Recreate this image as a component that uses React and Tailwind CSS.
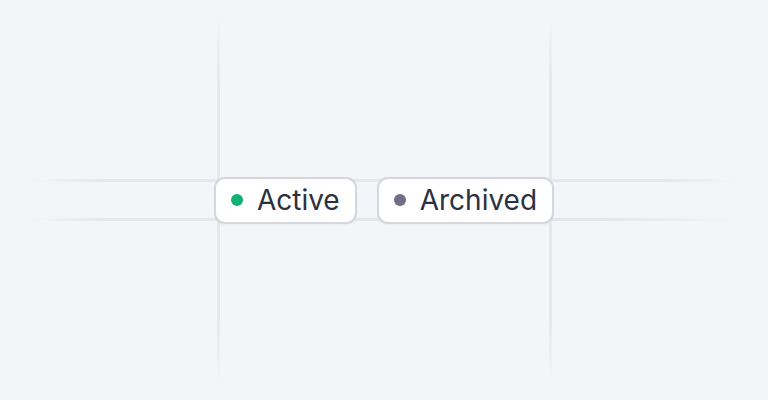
import React from 'react';

const badges = [
  { label: 'Active', dot: 'bg-[#10b173]' },
  { label: 'Archived', dot: 'bg-[#6e6e85]' },
];

function Badge({ label, dot }) {
  return (
    <div className="flex h-[47px] items-center gap-[14px] rounded-[11px] border-2 border-[#d6d7dd] bg-white pl-[15px] pr-[15px] shadow-[0_1px_2px_rgba(0,0,0,0.04)]">
      <span className={`h-3 w-3 rounded-full ${dot}`} />
      <span className="text-[28px] font-normal leading-none text-[#2c3040]">{label}</span>
    </div>
  );
}

export default function App() {
  return (
    <div className="relative h-[400px] w-[768px] overflow-hidden bg-[#f4f5f9] font-['Inter',sans-serif]">
      {/* guide lines */}
      <div className="absolute left-[217px] top-[15px] h-[370px] w-[3px] bg-[linear-gradient(to_bottom,transparent,#e6e7eb_18%,#e6e7eb_82%,transparent)]" />
      <div className="absolute left-[549px] top-[15px] h-[370px] w-[3px] bg-[linear-gradient(to_bottom,transparent,#e6e7eb_18%,#e6e7eb_82%,transparent)]" />
      <div className="absolute left-[30px] top-[179px] h-[3px] w-[705px] bg-[linear-gradient(to_right,transparent,#e6e7eb_10%,#e6e7eb_90%,transparent)]" />
      <div className="absolute left-[30px] top-[218px] h-[3px] w-[705px] bg-[linear-gradient(to_right,transparent,#e6e7eb_10%,#e4e5ea_80%,transparent)]" />

      <div className="relative flex h-full items-center justify-center gap-5">
        {badges.map((b) => (
          <Badge key={b.label} {...b} />
        ))}
      </div>
    </div>
  );
}
